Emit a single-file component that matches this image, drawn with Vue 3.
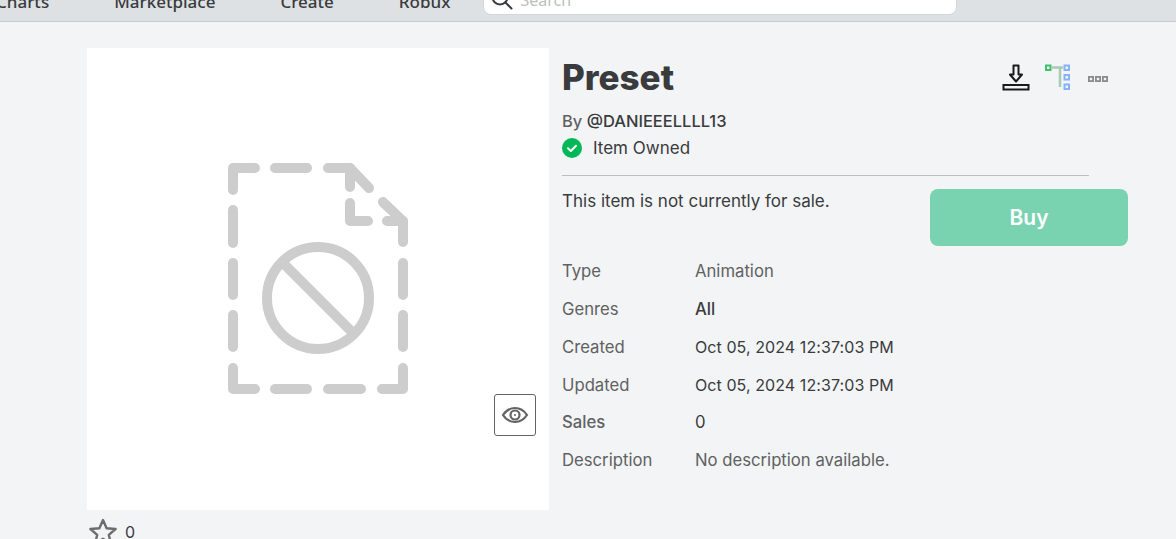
<template>
  <div class="page">
    <header class="nav">
      <a class="nav_item charts">Charts</a>
      <a class="nav_item market">Marketplace</a>
      <a class="nav_item create">Create</a>
      <a class="nav_item robux">Robux</a>
      <div class="search">
        <svg width="24" height="24" viewBox="0 0 24 24" fill="none" stroke="#393b3d" stroke-width="2">
          <circle cx="10" cy="9" r="7.5" />
          <path d="M15.5 14.5l6 6" stroke-linecap="round" />
        </svg>
        <span>Search</span>
      </div>
    </header>

    <main class="content">
      <section class="left">
        <div class="thumb">
          <svg width="180" height="232" viewBox="0 0 180 232" fill="none" stroke="#cdcdcd" stroke-width="10" stroke-linecap="round" stroke-linejoin="round">
            <path d="M5 27V5H27" />
            <path d="M47 5H79" />
            <path d="M100 5H122L141 25" />
            <path d="M122 5V24" />
            <path d="M122 40V58H140" />
            <path d="M155 39L175 58H159" />
            <path d="M175 58V79" />
            <path d="M175 100V132" />
            <path d="M175 152V184" />
            <path d="M175 205V226H154" />
            <path d="M133 226H100" />
            <path d="M79 226H47" />
            <path d="M5 205V226H27" />
            <path d="M5 47V80" />
            <path d="M5 100V132" />
            <path d="M5 152V184" />
            <circle cx="90" cy="135" r="51" />
            <path d="M54 99L126 171" stroke-linecap="butt" />
          </svg>
          <button class="preview">
            <svg width="28" height="18" viewBox="0 0 28 18" fill="none" stroke="#636363" stroke-width="2.200">
              <path d="M2 9C5 4.500 9 2 14 2s9 2.500 12 7c-3 4.500-7 7-12 7S5 13.500 2 9z" />
              <circle cx="14" cy="9" r="4.500" />
              <circle cx="14" cy="9" r="1" fill="#636363" stroke="none" />
            </svg>
          </button>
        </div>
        <div class="fav">
          <svg width="28" height="28" viewBox="0 0 28 28" fill="none" stroke="#6b6d6f" stroke-width="2.400" stroke-linejoin="round">
            <path d="M14 2l3.600 8.200 9 .8-6.800 5.800 2.100 8.800L14 20.900l-7.900 4.700 2.100-8.800L1.400 11l9-.8z" />
          </svg>
          <span>0</span>
        </div>
      </section>

      <section class="right">
        <div class="title_row">
          <h1>Preset</h1>
          <div class="tools">
            <svg width="28" height="28" viewBox="0 0 28 28" fill="none" stroke="#1a1a1a" stroke-width="2">
              <path d="M11.500 1.500h5v9h3.500L14 17.500 8 10.500h3.500z" stroke-linejoin="round" />
              <rect x="1.500" y="21" width="25" height="4.500" />
            </svg>
            <svg class="tree" width="26" height="28" viewBox="0 0 26 28" fill="none">
              <path d="M7 3.500h11M15 3.500V23" stroke="#a9cbb5" stroke-width="2.500" />
              <rect x="1" y="1.500" width="4.500" height="4.500" stroke="#3fc26f" stroke-width="2" />
              <rect x="19.500" y="1.500" width="4.500" height="4.500" stroke="#86b2fb" stroke-width="2" />
              <rect x="19.500" y="11" width="4.500" height="4.500" stroke="#86b2fb" stroke-width="2" />
              <rect x="19.500" y="20.500" width="4.500" height="4.500" stroke="#86b2fb" stroke-width="2" />
            </svg>
            <svg class="more" width="20" height="6" viewBox="0 0 20 6" fill="none" stroke="#8b8b8b" stroke-width="1.800">
              <rect x=".9" y=".9" width="4.200" height="4.200" />
              <rect x="7.900" y=".9" width="4.200" height="4.200" />
              <rect x="14.900" y=".9" width="4.200" height="4.200" />
            </svg>
          </div>
        </div>

        <div class="by">By <b>@DANIEEELLLL13</b></div>
        <div class="owned">
          <svg width="20" height="20" viewBox="0 0 20 20">
            <circle cx="10" cy="10" r="10" fill="#02b757" />
            <path d="M6 10.300l2.800 2.700L14 7.700" fill="none" stroke="#fff" stroke-width="2" stroke-linecap="round" stroke-linejoin="round" />
          </svg>
          <span>Item Owned</span>
        </div>
        <div class="divider"></div>

        <div class="sale_row">
          <p>This item is not currently for sale.</p>
          <button class="buy">Buy</button>
        </div>

        <dl class="info">
          <div v-for="row in rows" :key="row.label" class="info_row">
            <dt :class="{ strong: row.label == 'Sales' }">{{ row.label }}</dt>
            <dd :class="{ strong: row.label == 'Genres', date: row.date }">{{ row.value }}</dd>
          </div>
        </dl>
      </section>
    </main>
  </div>
</template>

<script setup>
const rows = [
  { label: 'Type', value: 'Animation' },
  { label: 'Genres', value: 'All' },
  { label: 'Created', value: 'Oct 05, 2024 12:37:03 PM', date: true },
  { label: 'Updated', value: 'Oct 05, 2024 12:37:03 PM', date: true },
  { label: 'Sales', value: '0' },
  { label: 'Description', value: 'No description available.' },
]
</script>

<style>
html, body { margin: 0; background: #f2f4f5; overflow: hidden; }
</style>

<style scoped>
.page { width: 1176px; height: 539px; overflow: hidden; background: #f2f4f5; font-family: Inter, "Noto Sans", sans-serif; color: #393b3d; }

.nav { height: 21px; display: flex; align-items: flex-end; background: #dee1e3; border-bottom: 1px solid #c8cacc; overflow: hidden; font-family: "Noto Sans", sans-serif; }
.nav_item { font-size: 17px; line-height: 22px; color: #393b3d; font-weight: 500; margin-bottom: 8px; white-space: nowrap; flex: none; }
.charts { margin-left: -4px; }
.market { margin-left: 65px; }
.create { margin-left: 65px; }
.robux { margin-left: 65px; }
.search { width: 474px; height: 36px; margin-left: 33px; margin-bottom: 6px; flex: none; display: flex; align-items: center; gap: 6px; padding: 6px 0 0 6px; box-sizing: border-box; background: #fff; border: 1px solid #d4d6d8; border-radius: 8px; color: #bdbebe; font-size: 16px; }
.search svg { flex: none; }

.content { display: flex; padding: 26px 0 0 87px; }
.left { width: 462px; flex: none; }
.thumb { position: relative; height: 462px; background: #fff; display: flex; align-items: center; justify-content: center; }
.preview { position: absolute; right: 13px; bottom: 74px; width: 42px; height: 42px; padding: 0; display: flex; align-items: center; justify-content: center; background: #fff; border: 1px solid #636363; border-radius: 3px; }
.fav { display: flex; align-items: center; gap: 8px; margin-top: 8px; margin-left: 2px; font-size: 16px; }

.right { width: 566px; margin-left: 13px; flex: none; }
.title_row { display: flex; justify-content: space-between; height: 56px; }
h1 { margin: 0; font-size: 35px; line-height: 58px; font-weight: 800; color: #393b3d; }
.tools { display: flex; align-items: flex-start; padding: 16px 20px 0 0; }
.tree { margin-left: 15px; }
.more { margin: 12px 0 0 17px; }

.by { margin-top: 6px; font-size: 16.500px; line-height: 22px; font-weight: 500; color: #606162; }
.by b { font-weight: 500; color: #393b3d; }
.owned { display: flex; align-items: center; gap: 11px; margin-top: 5px; font-size: 17px; line-height: 22px; }
.divider { width: 527px; height: 1px; margin-top: 16px; background: #bdbebe; }

.sale_row { display: flex; justify-content: space-between; margin-top: 13px; }
.sale_row p { margin: 1px 0 0; font-size: 17px; line-height: 22px; }
.buy { width: 198px; height: 57px; padding: 0; border: 0; border-radius: 8px; background: #79d3b1; color: #fff; font-family: inherit; font-size: 21px; font-weight: 600; }

.info { margin: 6.300px 0 0; }
.info_row { display: flex; height: 37.800px; align-items: center; font-size: 16.700px; }
.info dt { width: 133px; flex: none; color: #606162; }
.info dd { margin: 0; color: #393b3d; }
.info dd.date { font-size: 16px; letter-spacing: .08px; }
.info_row:first-child dd, .info_row:last-child dd { color: #606162; }
.info dd.strong { font-weight: 500; }
.info dt.strong { font-weight: 500; }
</style>
